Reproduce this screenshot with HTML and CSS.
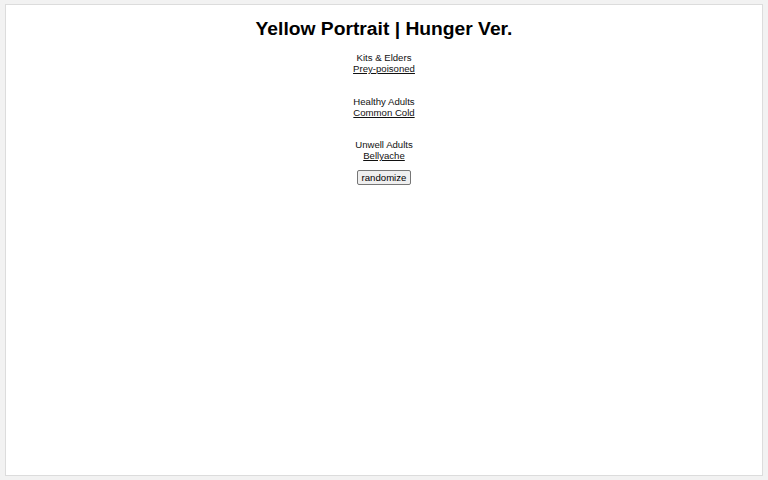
FILE: index.html
```html
<!DOCTYPE html>
<html lang="en">
<head>
  <meta charset="UTF-8">
  <title>Yellow Portrait | Hunger Ver.</title>
  <link rel="stylesheet" href="styles.css">
</head>
<body>
  <div class="page">
    <h1 class="title">Yellow Portrait | Hunger Ver.</h1>

    <div class="group">
      <div class="label">Kits &amp; Elders</div>
      <a class="result" href="#">Prey-poisoned</a>
    </div>

    <div class="group">
      <div class="label">Healthy Adults</div>
      <a class="result" href="#">Common Cold</a>
    </div>

    <div class="group">
      <div class="label">Unwell Adults</div>
      <a class="result" href="#">Bellyache</a>
    </div>

    <button class="randomize">randomize</button>
  </div>
</body>
</html>
```

FILE: styles.css
```css
html, body {
  height: 100%;
}

body {
  margin: 0;
  padding: 4px 5px 4px 5px;
  box-sizing: border-box;
  background: #f2f2f2;
  font-family: "Liberation Sans", Arial, sans-serif;
  color: #000;
}

.page {
  height: 100%;
  box-sizing: border-box;
  background: #fff;
  border: 1px solid #dcdcdc;
  text-align: center;
  font-size: 9.6px;
  line-height: 11px;
}

.title {
  margin: 12px 0 12px;
  font-size: 19.25px;
  line-height: 23px;
  font-weight: bold;
}

.group {
  margin-bottom: 21.5px;
}

.group:last-of-type {
  margin-bottom: 9px;
}

.label {
  display: block;
  color: #111;
}

.result {
  color: #111;
  text-decoration: underline;
}

.randomize {
  font-family: "Liberation Sans", Arial, sans-serif;
  font-size: 9.6px;
  line-height: 11px;
  padding: 1px 4px;
  margin: 0;
  background: #efefef;
  border: 1px solid #767676;
  border-radius: 2px;
  color: #000;
}
```
